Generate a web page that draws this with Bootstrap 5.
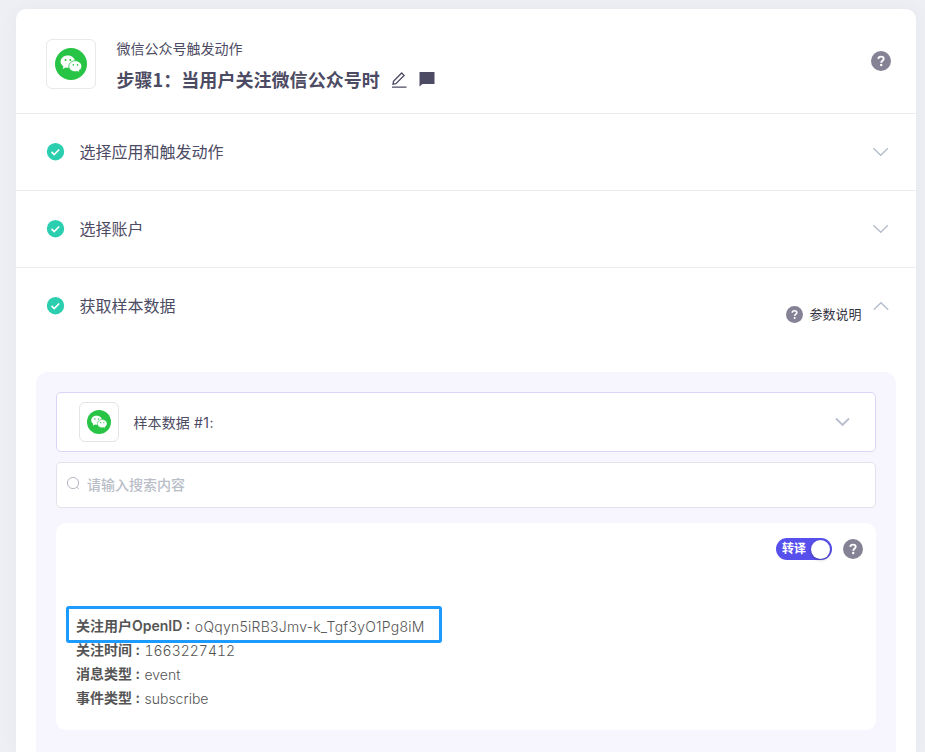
<!DOCTYPE html>
<html lang="zh-CN">
<head>
<meta charset="utf-8">
<meta name="viewport" content="width=device-width, initial-scale=1">
<title>步骤1</title>
<link href="https://cdn.jsdelivr.net/npm/bootstrap@5.3.0/dist/css/bootstrap.min.css" rel="stylesheet">
<style>
body{background:#eeeff4;font-family:Inter,"Noto Sans CJK SC",sans-serif;color:#4c4b63;font-size:14px;line-height:20px}
svg{display:block;flex:none}
.step-card{width:900px;margin-left:16px;height:743px;border-radius:10px 10px 0 0;box-shadow:0 0 20px rgba(60,60,110,.035)}
.page{padding-top:9px;height:752px;overflow:hidden}
.step-head{height:105px;padding:30px 25px 0 30px;border-bottom:1px solid #ebebee}
.logo-box{width:50px;height:50px;border:1px solid #e9e9ec;border-radius:6px}
.logo-box.logo-sm{width:40px;height:40px;border-color:#e4e4e8}
.head-copy{margin-left:20.500px}
.head-help{margin-top:12px}
.step-title{font-family:"Noto Sans CJK SC",sans-serif;font-size:18px;line-height:26px;font-weight:700;letter-spacing:.05px;margin:7px 12px 0 0}
.step-row{height:77px;padding:0 27px 0 30px;border-bottom:1px solid #ebebee;font-size:16px}
.step-row.opened{border:0;height:104px;padding-top:29px}
.row-name{margin-left:14.500px;line-height:24px}
.opened .row-name{margin-top:-3px}
.hint{font-size:13px;color:#35343f;margin-top:7px;margin-right:11.500px}
.hint-text{margin-left:6.500px}
.panel{margin:0 20px;padding:20px;background:#f7f6ff;border-radius:12px 12px 0 0;height:380px}
.picker{height:60px;border:1px solid #dad5fa;border-radius:5px;padding:0 25px 0 22px}
.picker-name{margin:2px 0 0 14.500px;letter-spacing:.1px}
.picker-name span{letter-spacing:.5px}
.finder{height:46px;margin-top:10px;border:1px solid #e2e2ea;border-radius:5px;padding:0 10px 0 9px;color:#b9bec8}
.finder-text{margin-left:7px;font-weight:500}
.result{height:207px;margin-top:15px;border-radius:10px;padding:15px 13px 0 10px}
.toggle-pill{width:56px;height:22px;background:#5850ec;color:#fff;font-size:12px;font-weight:700;padding:0 2px 0 6px;margin-right:11px}
.knob{width:19px;height:19px;background:#fff;box-shadow:0 1px 3px rgba(0,0,0,.3)}
.fields{margin-top:46px;color:#555}
.field-line{height:24px;padding-left:10px;line-height:24px;white-space:nowrap}
.field-line.marked{width:376px;height:37px;border:3px solid #1b9aff;border-radius:3px;padding:5px 0 0 7px;margin-bottom:-5px}
.field-line b{font-weight:600}
.field-line .val{font-weight:300;font-variant-numeric:tabular-nums;margin-left:4.500px;position:relative;top:1px}
.field-line.marked .val{font-variant-numeric:normal;letter-spacing:.25px}
</style>
<script src="https://cdn.jsdelivr.net/npm/bootstrap@5.3.0/dist/js/bootstrap.bundle.min.js"></script>
</head>
<body>
<svg width="0" height="0" class="position-absolute">
<defs>
<symbol id="wechat" viewBox="0 0 32 32">
<circle cx="16" cy="16" r="16" fill="#28c445"/>
<path fill="#fff" d="M12.800 7.500C8.700 7.500 5.600 10.200 5.600 13.600c0 2 1.100 3.700 2.800 4.800l-.7 2.500 2.800-1.500c.8.200 1.500.300 2.300.300C16.900 19.700 20 17 20 13.600S16.900 7.500 12.800 7.500z"/>
<path fill="#fff" stroke="#28c445" stroke-width=".8" d="M20.300 12.700c-3.600 0-6.500 2.500-6.500 5.500s2.900 5.500 6.500 5.500c.8 0 1.500-.1 2.100-.3l2.200 1.200-.6-2c1.700-1 2.800-2.600 2.800-4.400 0-3-2.900-5.500-6.500-5.500z"/>
<g fill="#28c445"><circle cx="10.500" cy="12" r="1"/><circle cx="15.300" cy="12" r="1"/><circle cx="18.300" cy="16.900" r=".8"/><circle cx="22.500" cy="16.900" r=".8"/></g>
</symbol>
<symbol id="check" viewBox="0 0 18 18"><circle cx="9" cy="8.700" r="8.700" fill="#2bceae"/><path d="M5 8.900l2.700 2.600 5-5" fill="none" stroke="#fff" stroke-width="1.700"/></symbol>
<symbol id="help" viewBox="0 0 20 20"><circle cx="10" cy="10" r="10" fill="#858296"/><path d="M7.300 7.900c.1-1.500 1.200-2.300 2.700-2.300s2.700.8 2.700 2.200c0 1.900-2.500 1.800-2.500 3.900" fill="none" stroke="#fff" stroke-width="1.900"/><circle cx="10.200" cy="14" r="1.200" fill="#fff"/></symbol>
<symbol id="down" viewBox="0 0 16 10"><path d="M.5 1.200L7.700 8.300l7.200-7.100" fill="none" stroke="#b4bccc" stroke-width="1.300"/></symbol>
</defs>
</svg>
<div class="page">
<main class="step-card bg-white">
  <header class="step-head d-flex">
    <div class="logo-box d-flex align-items-center justify-content-center"><svg width="32" height="32"><use href="#wechat"/></svg></div>
    <div class="head-copy flex-grow-1">
      <div>微信公众号触发动作</div>
      <div class="d-flex align-items-center">
        <h1 class="step-title">步骤1：当用户关注微信公众号时</h1>
        <svg class="mt-2 me-2" width="15" height="16" viewBox="0 0 15 16" fill="none" stroke="#4c4b63" stroke-width="1.300"><path d="M1.500 9.200L9.700 1l2.400 2.400-8.200 8.200-2.900.5zM0 15.200h14.500"/></svg>
        <svg class="mt-2 ms-1" width="16" height="15" viewBox="0 0 16 15"><path d="M.5 0h15v12H3.500L.5 14.500z" fill="#4c4b63"/></svg>
      </div>
    </div>
    <svg class="head-help" width="20" height="20"><use href="#help"/></svg>
  </header>
  <section class="step-row d-flex align-items-center">
    <svg width="19" height="18"><use href="#check"/></svg><span class="row-name flex-grow-1">选择应用和触发动作</span>
    <svg width="16" height="10"><use href="#down"/></svg>
  </section>
  <section class="step-row d-flex align-items-center">
    <svg width="19" height="18"><use href="#check"/></svg><span class="row-name flex-grow-1">选择账户</span>
    <svg width="16" height="10"><use href="#down"/></svg>
  </section>
  <section class="step-row opened d-flex align-items-start">
    <svg width="19" height="18"><use href="#check"/></svg><span class="row-name flex-grow-1">获取样本数据</span>
    <div class="hint d-flex align-items-center"><svg width="17" height="17"><use href="#help"/></svg><span class="hint-text">参数说明</span></div>
    <svg class="mt-1" width="16" height="10" viewBox="0 0 16 10" fill="none" stroke="#b4bccc" stroke-width="1.300"><path d="M.8 8.800L8 1.700l7.200 7.100"/></svg>
  </section>
  <section class="panel">
    <div class="picker bg-white d-flex align-items-center">
      <div class="logo-box logo-sm d-flex align-items-center justify-content-center"><svg width="24" height="24"><use href="#wechat"/></svg></div>
      <span class="picker-name flex-grow-1">样本数据 <span>#1:</span></span>
      <svg width="15" height="10" viewBox="0 0 15 10" fill="none" stroke="#b9bfce" stroke-width="2"><path d="M1 1.500l6.500 6.400L14 1.500"/></svg>
    </div>
    <div class="finder bg-white d-flex align-items-center">
      <svg class="mb-1" width="14" height="14" viewBox="0 0 14 14" fill="none" stroke="#b4b8c2"><circle cx="7" cy="7" r="5.600"/><path d="M10.800 11l2 2.200"/></svg>
      <span class="finder-text">请输入搜索内容</span>
    </div>
    <div class="result bg-white">
      <div class="d-flex justify-content-end align-items-center">
        <div class="toggle-pill rounded-pill d-flex align-items-center justify-content-between"><span>转译</span><span class="knob rounded-circle"></span></div>
        <svg width="20" height="20"><use href="#help"/></svg>
      </div>
      <div class="fields">
        <div class="field-line marked"><b>关注用户OpenID :</b><span class="val">oQqyn5iRB3Jmv-k_Tgf3yO1Pg8iM</span></div>
        <div class="field-line"><b>关注时间 :</b><span class="val">1663227412</span></div>
        <div class="field-line"><b>消息类型 :</b><span class="val">event</span></div>
        <div class="field-line"><b>事件类型 :</b><span class="val">subscribe</span></div>
      </div>
    </div>
  </section>
</main>
</div>
</body>
</html>
